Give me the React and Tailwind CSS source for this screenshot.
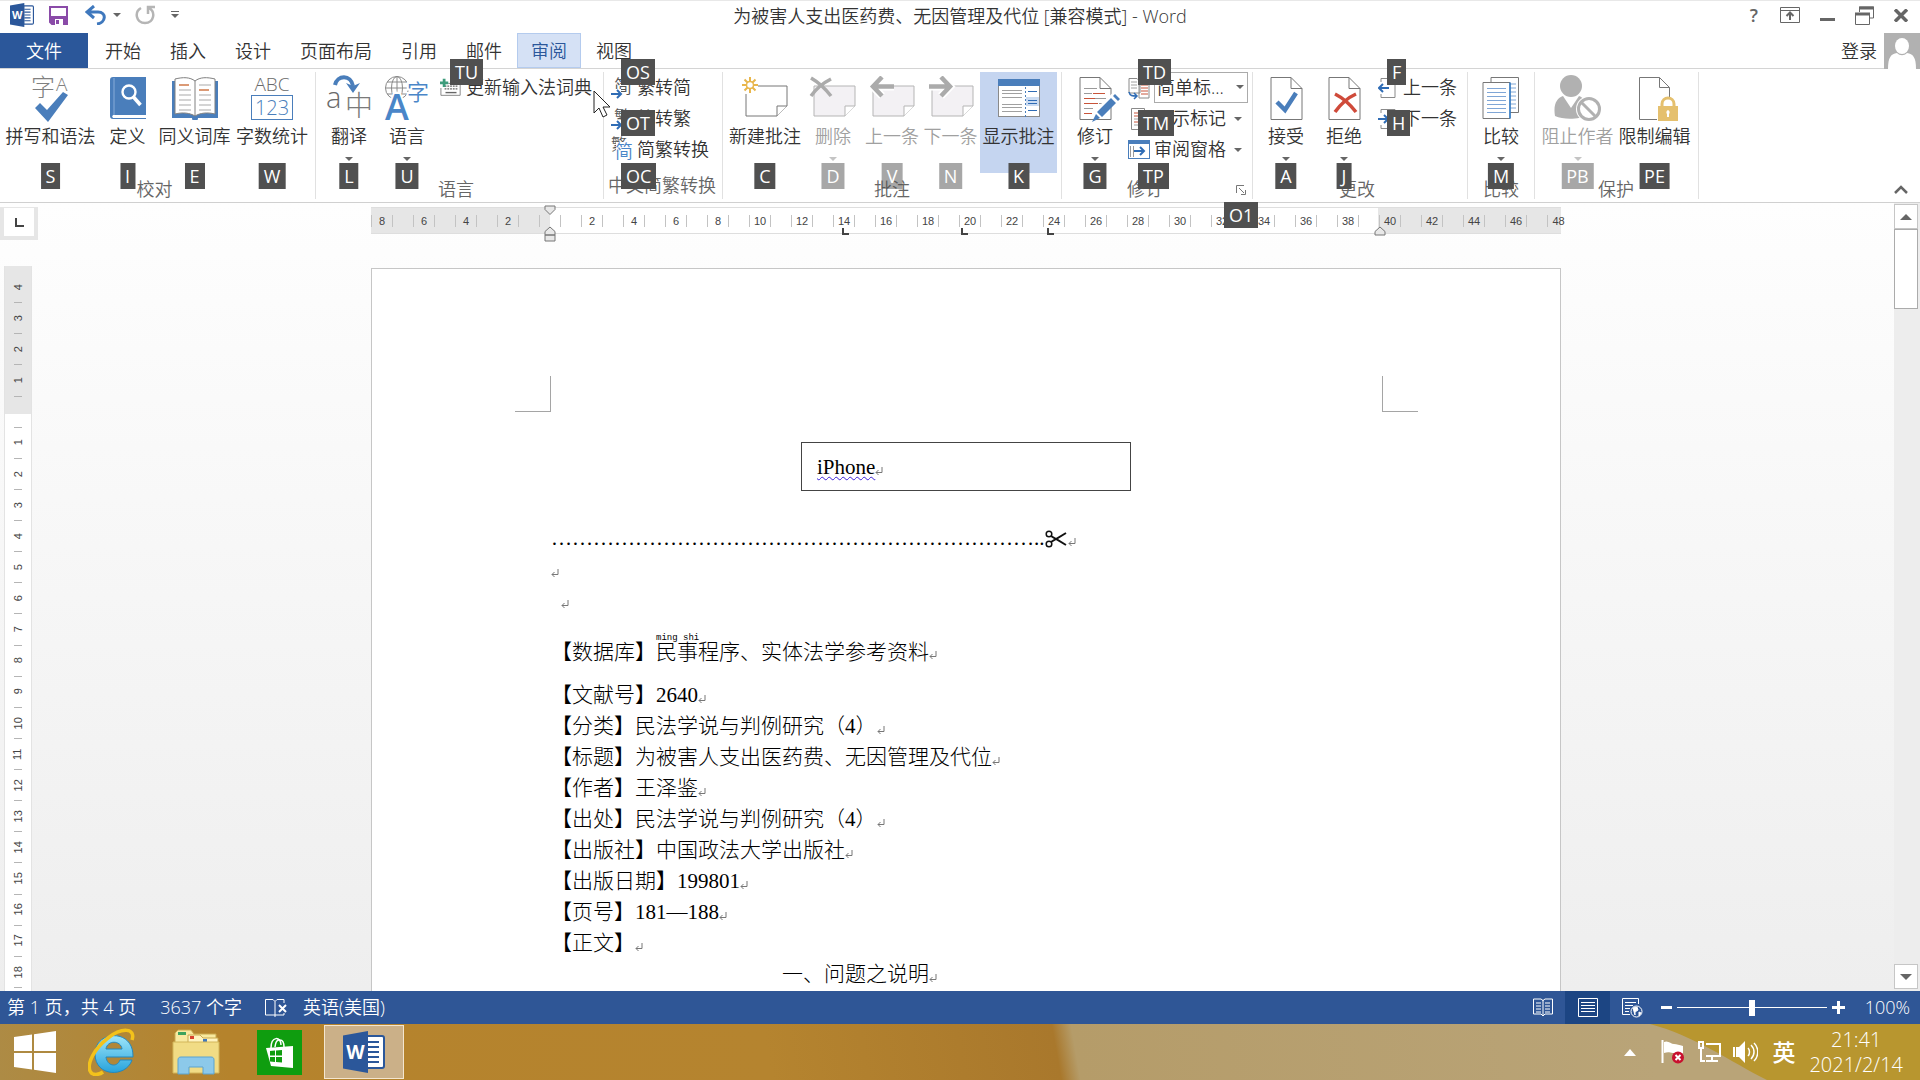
import React from 'react';
import clsx from 'clsx';

const UI_FONT = "font-['Open_Sans','Noto_Sans_CJK_SC',sans-serif]";
const DOC_FONT = "font-['Liberation_Serif','Noto_Sans_CJK_SC',serif]";

const tabs = ['开始', '插入', '设计', '页面布局', '引用', '邮件', '审阅', '视图'];
const hRuler = [8, 6, 4, 2, '', 2, 4, 6, 8, 10, 12, 14, 16, 18, 20, 22, 24, 26, 28, 30, 32, 34, 36, 38, 40, 42, 44, 46, 48];
const vRuler = [4, 3, 2, 1, '', 1, 2, 3, 4, 5, 6, 7, 8, 9, 10, 11, 12, 13, 14, 15, 16, 17, 18];

const records = [
    '【文献号】2640',
    '【分类】民法学说与判例研究（4）',
    '【标题】为被害人支出医药费、无因管理及代位',
    '【作者】王泽鉴',
    '【出处】民法学说与判例研究（4）',
    '【出版社】中国政法大学出版社',
    '【出版日期】199801',
    '【页号】181—188',
    '【正文】',
];

/* ---------- shared bits ---------- */

function KeyTip({ children, className, dim }) {
    return (
        <span className={clsx('absolute z-20 h-[26px] px-[5px] text-center text-lg leading-[26px] font-normal text-white', dim ? 'bg-[#505050]/50' : 'bg-[#505050]', className)}>
            {children}
        </span>
    );
}

function Caret({ className }) {
    return (
        <svg width="8" height="4" viewBox="0 0 8 4" className={clsx('shrink-0', className)}>
            <path d="M0 0h8L4 4z" fill="currentColor" />
        </svg>
    );
}

function Group({ label, children, className, labelClass, launcher }) {
    return (
        <section className={clsx('relative flex h-[127px] shrink-0 flex-col border-r border-[#e1e1e1]', className)}>
            <div className="flex h-[103px]">{children}</div>
            <div className={clsx('pt-0.5 text-center text-lg leading-[28px] whitespace-nowrap text-[#666]', labelClass)}>{label}</div>
            {launcher}
        </section>
    );
}

function BigButton({ icon, label, tip, arrow, disabled, active, className }) {
    return (
        <button
            disabled={disabled}
            className={clsx('relative flex h-[101px] flex-col items-center pt-0.5 text-lg', className, active && 'bg-[#c5d5f0]', disabled ? 'text-[#a0a0a0]' : 'text-[#333]')}
        >
            <span className="flex h-12 items-center justify-center">{icon}</span>
            <span className="leading-[28px] whitespace-nowrap">{label}</span>
            {arrow && <Caret className={clsx('mt-[7px]', disabled ? 'text-[#c4c4c4]' : 'text-[#666]')} />}
            <KeyTip dim={disabled} className="top-[91px] left-1/2 -translate-x-1/2">{tip}</KeyTip>
        </button>
    );
}

function SmallButton({ icon, label, tip, tipClass, arrow }) {
    return (
        <button className="relative flex h-[31px] items-center gap-1 text-lg whitespace-nowrap text-[#333]">
            <span className="flex w-[22px] shrink-0 justify-center">{icon}</span>
            <span className="pb-0.5 leading-7">{label}</span>
            {arrow && <Caret className="ml-1 text-[#666]" />}
            <KeyTip className={tipClass}>{tip}</KeyTip>
        </button>
    );
}

/* ---------- ribbon icons ---------- */

const SpellIcon = () => (
    <svg width="44" height="48" viewBox="0 0 44 48" className="overflow-visible">
        <text x="2" y="22" fontSize="24" fontWeight="300" fill="#808080" fontFamily="Noto Sans CJK SC">字</text>
        <text x="27" y="17" fontSize="19" fill="#808080" fontFamily="Open Sans">A</text>
        <path d="M6 34l5-5 7 7L34 18l5 3-20 27z" fill="#4a7ebb" />
    </svg>
);

const DefineIcon = () => (
    <svg width="36" height="42" viewBox="0 0 36 42">
        <path d="M3 0h33v38H3a2 2 0 000 3h33v1H3a3 3 0 01-3-3V3a3 3 0 013-3z" fill="#4a7ebb" />
        <path d="M4 1v37" stroke="#86abd8" />
        <circle cx="19" cy="15" r="6.500" fill="none" stroke="#fff" strokeWidth="2.400" />
        <path d="M23.500 20l7 8" stroke="#fff" strokeWidth="3.500" />
    </svg>
);

const ThesaurusIcon = () => (
    <svg width="46" height="44" viewBox="0 0 46 44">
        <path d="M0 5h46v37H26a3 3 0 01-6 0H0z" fill="#4a7ebb" />
        <path d="M3 3c8-2 15-2 20 2 5-4 12-4 20-2v35c-8-2-15-1-20 2-5-3-12-4-20-2z" fill="#fff" stroke="#808080" />
        <path d="M23 5v35" stroke="#808080" />
        <path d="M7 14h12M7 19h12M7 24h12M7 29h12M7 34h12M27 9h12M27 19h12M27 24h12M27 29h12M27 34h12" stroke="#a9a9a9" />
        <path d="M7 9h10M27 14h10" stroke="#cf7a4a" strokeWidth="1.500" />
    </svg>
);

const CountIcon = () => (
    <svg width="42" height="48" viewBox="0 0 42 48" className="overflow-visible">
        <text x="21" y="17" fontSize="19" textAnchor="middle" fill="#6a6a6a" fontFamily="Open Sans">ABC</text>
        <rect x="0.500" y="21.500" width="41" height="24" fill="#fff" stroke="#4a7ebb" />
        <text x="21" y="41" fontSize="20" textAnchor="middle" fill="#4a7ebb" fontFamily="Open Sans">123</text>
    </svg>
);

const TranslateIcon = () => (
    <svg width="48" height="48" viewBox="0 0 48 48" className="overflow-visible">
        <text x="1" y="34" fontSize="29" fill="#6a6a6a" fontFamily="Open Sans">a</text>
        <text x="20" y="42" fontSize="28" fill="#7a7a7a" fontFamily="Noto Sans CJK SC" fontWeight="300">中</text>
        <path d="M10 11C12 1 26 0 28 12" fill="none" stroke="#4a7ebb" strokeWidth="4" />
        <path d="M21 9l7 10 7-10-7 3z" fill="#4a7ebb" />
    </svg>
);

const LanguageIcon = () => (
    <svg width="46" height="48" viewBox="0 0 46 48" className="overflow-visible">
        <g fill="none" stroke="#8a8a8a">
            <circle cx="13" cy="14" r="11.500" />
            <ellipse cx="13" cy="14" rx="5.500" ry="11.500" />
            <path d="M13 2v24M1.500 14h23M3 8h20M3 20h20" />
        </g>
        <text x="23" y="26" fontSize="22" fill="#4a86c8" stroke="#fff" strokeWidth="4" paintOrder="stroke" fontFamily="Noto Sans CJK SC">字</text>
        <text x="1" y="46" fontSize="36" fontWeight="600" fill="#4a86c8" stroke="#fff" strokeWidth="4" paintOrder="stroke" fontFamily="Open Sans">A</text>
    </svg>
);

const KeyboardIcon = () => (
    <svg width="24" height="22" viewBox="0 0 24 22">
        <path d="M9 6h13v13H1v-8" fill="none" stroke="#808080" />
        <path d="M5 12h15M5 9h15" stroke="#666" strokeWidth="1.500" strokeDasharray="2 1" />
        <path d="M6 16h12" stroke="#666" strokeWidth="1.500" />
        <path d="M4.500 1v9M0 5.500h9" stroke="#3f9c7c" strokeWidth="3" />
    </svg>
);

const ConvertIcon = ({ from }) => (
    <svg width="22" height="26" viewBox="0 0 22 26" className="overflow-visible">
        <text x="3" y="18" fontSize="18" fill="#555" fontFamily="Noto Sans CJK SC">{from}</text>
        <rect x="0" y="14" width="10" height="10" fill="#fff" />
        <path d="M0 19h9M6 15l4 4-4 4" fill="none" stroke="#2f6cb5" strokeWidth="2" />
    </svg>
);

const BothIcon = () => (
    <svg width="22" height="28" viewBox="0 0 22 28" className="overflow-visible">
        <text x="0" y="14" fontSize="16" fill="#555" fontFamily="Noto Sans CJK SC">繁</text>
        <rect x="5" y="6" width="17" height="20" fill="#fff" />
        <text x="4" y="22" fontSize="18" fill="#4a86c8" fontFamily="Noto Sans CJK SC">简</text>
    </svg>
);

function Note({ dim, children }) {
    return (
        <svg width="48" height="44" viewBox="0 0 48 44">
            <path d="M5 10h41v20L36 40H5z" fill={dim ? '#f3f1f4' : '#fff'} stroke={dim ? '#b5b5b5' : '#777'} />
            <path d="M36 40V30h10" fill="#fff" stroke={dim ? '#b5b5b5' : '#777'} />
            {children}
        </svg>
    );
}

const NewNoteIcon = () => (
    <Note>
        <rect x="1" y="2" width="16" height="16" fill="#fff" />
        <path d="M9 1v16M1 9h16M3.500 3.500l11 11M14.500 3.500l-11 11" stroke="#e8b64c" strokeWidth="2" />
        <circle cx="9" cy="9" r="3.500" fill="#fff" stroke="#e8b64c" strokeWidth="1.500" />
    </Note>
);

const DeleteNoteIcon = () => (
    <Note dim>
        <path d="M2 2c7 4 13 9 20 18M22 3C14 7 7 13 2 20" fill="none" stroke="#ababab" strokeWidth="3.500" />
    </Note>
);

const PrevNoteIcon = () => (
    <Note dim>
        <path d="M26 10.500H6M14 1L5 10.500 14 20" fill="none" stroke="#fff" strokeWidth="8" />
        <path d="M26 10.500H6M14 1L5 10.500 14 20" fill="none" stroke="#ababab" strokeWidth="4.500" />
    </Note>
);

const NextNoteIcon = () => (
    <Note dim>
        <path d="M2 10.500h20M14 1l9 9.500L14 20" fill="none" stroke="#fff" strokeWidth="8" />
        <path d="M2 10.500h20M14 1l9 9.500L14 20" fill="none" stroke="#ababab" strokeWidth="4.500" />
    </Note>
);

const ShowNotesIcon = () => (
    <svg width="42" height="38" viewBox="0 0 42 38">
        <rect x="0.500" y="0.500" width="41" height="37" fill="#fff" stroke="#8a8a8a" />
        <path d="M0 0h42v7H0z" fill="#4a7ebb" />
        <path d="M4 11.500h20M4 14.500h20M4 18.500h20M4 25.500h20M4 28.500h20M4 32.500h20" stroke="#a0a0a0" />
        <path d="M27.500 8v30" stroke="#4a7ebb" strokeDasharray="2 2" />
        <path d="M28 18h13v9H28z" fill="#cbdcf2" />
        <path d="M30 12.500h9M30 21.500h9M30 24.500h9M30 31.500h9" stroke="#2f6cb5" />
    </svg>
);

function Sheet({ children }) {
    return (
        <svg width="36" height="48" viewBox="0 0 36 48" className="overflow-visible">
            <path d="M3 3.500h20l11 11v31H3z" fill="#fff" stroke="#777" />
            <path d="M23 3.500v11h11" fill="none" stroke="#777" />
            {children}
        </svg>
    );
}

const TrackIcon = () => (
    <Sheet>
        <path d="M7 14.500h13M7 19.500h8M18 24.500h11M7 34.500h9M22 29.500h6" stroke="#9a9a9a" />
        <path d="M16 19.500h12M7 24.500h11M7 29.500h14M7 39.500h8" stroke="#c8543a" />
        <path d="M19 41L39 22" stroke="#fff" strokeWidth="9" />
        <path d="M20 38l14-14 5 5-14 14zM36 22l2-2 5 5-2 2zM19 40l4 4-8 4z" fill="#4a7ebb" />
    </Sheet>
);

const AcceptIcon = () => (
    <Sheet>
        <path d="M9 28l8 8 11-17" fill="none" stroke="#4a7ebb" strokeWidth="4.500" />
    </Sheet>
);

const RejectIcon = () => (
    <Sheet>
        <path d="M9 20c8 4 14 9 21 18M30 20C21 24 14 31 9 38" fill="none" stroke="#cf4a3a" strokeWidth="3.500" />
    </Sheet>
);

const DisplayIcon = () => (
    <svg width="22" height="24" viewBox="0 0 22 24">
        <path d="M1 2.500h8l3 3V17H1zM11 5.500h10V22H11z" fill="#fff" stroke="#8a8a8a" />
        <path d="M3 6h6M3 9h6M3 12h6" stroke="#a0a0a0" />
        <path d="M13 9h7M13 12h7M13 15h7M13 18h7" stroke="#c8543a" />
        <path d="M1 16c1 4 3 4 8 4M6 17l3 3-3 3" fill="none" stroke="#2f6cb5" strokeWidth="1.500" />
    </svg>
);

const MarkupIcon = () => (
    <svg width="22" height="24" viewBox="0 0 22 24">
        <path d="M3.500 1.500h13v21h-13z" fill="#fff" stroke="#8a8a8a" />
        <path d="M6 6h8M6 9h8M6 15h8" stroke="#c8543a" />
        <path d="M6 12h8M6 18h8" stroke="#a0a0a0" />
    </svg>
);

const PaneIcon = () => (
    <svg width="22" height="20" viewBox="0 0 22 20">
        <rect x="0.500" y="0.500" width="21" height="18" fill="#fff" stroke="#4a7ebb" />
        <path d="M0 0h22v4H0z" fill="#4a7ebb" />
        <path d="M2.500 6v11M5.500 6v11" stroke="#9a9a9a" />
        <path d="M6 11h10M12 7l4 4-4 4" fill="none" stroke="#2f6cb5" strokeWidth="2" />
    </svg>
);

const StepIcon = ({ next }) => (
    <svg width="20" height="22" viewBox="0 0 20 22">
        <path d="M3 5V1.500h14v19H3V17" fill="#fff" stroke="#8a8a8a" />
        <path d={next ? 'M0 11h10M6 7l4 4-4 4' : 'M11 11H1M5 7l-4 4 4 4'} fill="none" stroke="#2f6cb5" strokeWidth="2" />
    </svg>
);

const CompareIcon = () => (
    <svg width="38" height="44" viewBox="0 0 38 44">
        <path d="M9 1.500h27.500v35H9z" fill="#fff" stroke="#777" />
        <path d="M28 8h6M28 12h6M28 16h6M28 20h6M28 24h6M28 28h6M28 32h6" stroke="#7fa6d6" />
        <path d="M1 6.500h27v36H1z" fill="#fff" stroke="#777" />
        <path d="M28 6.500v36" stroke="#2f7fd0" strokeWidth="1.500" />
        <path d="M5 12.500h19M5 16.500h19M5 20.500h19M5 24.500h19M5 28.500h19M5 32.500h19M5 36.500h19" stroke="#7fa6d6" />
    </svg>
);

const BlockIcon = () => (
    <svg width="48" height="48" viewBox="0 0 48 48">
        <circle cx="17" cy="12" r="11" fill="#b1b1b1" />
        <path d="M1 42c-2-12 2-18 8-20l8 12 8-12c5 2 8 6 9 18-8 6-24 6-33 2z" fill="#b1b1b1" />
        <circle cx="35" cy="35" r="13" fill="#fff" />
        <circle cx="35" cy="35" r="10.500" fill="none" stroke="#b1b1b1" strokeWidth="3" />
        <path d="M27 28l15 15" stroke="#b1b1b1" strokeWidth="3" />
    </svg>
);

const RestrictIcon = () => (
    <svg width="34" height="48" viewBox="0 0 34 48" className="overflow-visible">
        <path d="M1.500 3.500h20l10 10v32h-30z" fill="#fff" stroke="#777" />
        <path d="M21.500 3.500v10h10" fill="none" stroke="#777" />
        <path d="M19 24h23v24H19z" fill="#fff" />
        <path d="M24 34v-4c0-8 12-8 12 0v4" fill="none" stroke="#e5c06e" strokeWidth="3" />
        <path d="M20 32h20v15H20z" fill="#e5c06e" />
        <path d="M30 36a2.500 2.500 0 011 4v3h-2v-3a2.500 2.500 0 011-4z" fill="#fff" />
    </svg>
);

/* ---------- window chrome ---------- */

const WordIcon = ({ size }) => (
    <svg width={size} height={size} viewBox="0 0 42 42">
        <path d="M24 5h15a2 2 0 012 2v28a2 2 0 01-2 2H24z" fill="#fff" stroke="#2b579a" strokeWidth="2" />
        <path d="M25 11h11M25 16h11M25 21h11M25 26h11M25 31h11" stroke="#2b579a" strokeWidth="2" />
        <path d="M0 4.500L25 0v42L0 37.500z" fill="#2b579a" />
        <text x="12.500" y="28" fontSize="19" fontWeight="700" textAnchor="middle" fill="#fff" fontFamily="Open Sans">W</text>
    </svg>
);

function TitleBar() {
    return (
        <header className="relative flex h-[33px] shrink-0 items-center justify-between border-t border-[#e8e8e8] text-[#666]">
            <div className="flex items-center pb-1 pl-2.5">
                <button aria-label="Word"><WordIcon size={24} /></button>
                <button aria-label="保存" className="ml-[15px]">
                    <svg width="19" height="19" viewBox="0 0 19 19">
                        <path d="M1 1h17v17H3l-2-2z" fill="#fff" stroke="#8a4ba8" strokeWidth="2" />
                        <path d="M2 10h15v8H2z" fill="#8a4ba8" />
                        <path d="M6 13h8v6H6z" fill="#fff" />
                        <path d="M7 14h3v4H7z" fill="#8a4ba8" />
                    </svg>
                </button>
                <button aria-label="撤消" className="ml-[17px] flex items-center gap-1.5">
                    <svg width="22" height="20" viewBox="0 0 22 20">
                        <path d="M9 1L2 7l7 6M3 7h10c9 0 8 11-1 12" fill="none" stroke="#3f78bd" strokeWidth="3" />
                    </svg>
                    <Caret />
                </button>
                <button aria-label="恢复" className="ml-3.5">
                    <svg width="20" height="20" viewBox="0 0 20 20">
                        <path d="M6 3C-1 7 1 18 10 18s11-11 4-15M13 9V2h7" fill="none" stroke="#b5b5b5" strokeWidth="2.500" />
                    </svg>
                </button>
                <button aria-label="自定义快速访问工具栏" className="ml-4">
                    <svg width="8" height="8" viewBox="0 0 8 8">
                        <path d="M0 0.500h8" stroke="#666" />
                        <path d="M0 3h8L4 7z" fill="#666" />
                    </svg>
                </button>
            </div>
            <h1 className="absolute left-1/2 -translate-x-1/2 pb-0.5 text-lg leading-[30px] whitespace-nowrap text-[#333]">
                为被害人支出医药费、无因管理及代位 [兼容模式] - Word
            </h1>
            <div className="flex items-center gap-5 pr-3 pb-1">
                <button aria-label="帮助" className="mr-0.5 text-lg leading-6 font-semibold">?</button>
                <button aria-label="功能区显示选项">
                    <svg width="20" height="16" viewBox="0 0 20 16" fill="none" stroke="#666">
                        <path d="M0.500 0.500h19v15H0.500zM0.500 3.500h19" />
                        <path d="M10 13V6M6.500 9L10 5.500 13.500 9" strokeWidth="2" />
                    </svg>
                </button>
                <button aria-label="最小化" className="pt-2">
                    <svg width="15" height="3" viewBox="0 0 15 3"><path d="M0 0h15v3H0z" fill="#666" /></svg>
                </button>
                <button aria-label="向下还原">
                    <svg width="19" height="19" viewBox="0 0 19 19" fill="none" stroke="#666">
                        <path d="M4.500 6V1h14v11H15" />
                        <path d="M4 2h15M0 8h15" strokeWidth="3" />
                        <path d="M0.500 7v11.500h14V7" />
                    </svg>
                </button>
                <button aria-label="关闭">
                    <svg width="14" height="13" viewBox="0 0 14 13"><path d="M1 0.500l12 12M13 0.500l-12 12" stroke="#666" strokeWidth="3.500" /></svg>
                </button>
            </div>
        </header>
    );
}

function TabStrip() {
    return (
        <nav className="flex h-9 shrink-0 border-b border-[#d4d4d4] text-lg text-[#333]">
            <button className="w-[88px] bg-[#2b579a] text-white">文件</button>
            <div className="ml-[3px] flex gap-px">
                {tabs.map((t) => (
                    <button key={t} className={clsx('px-3.5', t === '审阅' && 'bg-[#d5e1f5] text-[#2b579a] outline -outline-offset-1 outline-[#b4cbee]')}>
                        {t}
                    </button>
                ))}
            </div>
            <button className="ml-auto flex items-center gap-[7px]">
                登录
                <svg width="36" height="36" viewBox="0 0 36 36">
                    <path d="M0 0h36v36H0z" fill="#b1b1b1" />
                    <ellipse cx="18" cy="13" rx="7" ry="8" fill="#fff" />
                    <path d="M4 36c0-12 3-15 9-16 3 3 7 3 10 0 6 1 9 4 9 16z" fill="#fff" />
                </svg>
            </button>
        </nav>
    );
}

function Ribbon() {
    return (
        <div className="relative flex h-[134px] shrink-0 border-b border-[#d0d0d0] pt-[3px]">
            <Group label="校对" className="pr-1.5">
                <BigButton icon={<SpellIcon />} label="拼写和语法" tip="S" className="w-[101px]" />
                <BigButton icon={<DefineIcon />} label="定义" tip="I" className="w-[53px]" />
                <BigButton icon={<ThesaurusIcon />} label="同义词库" tip="E" className="w-[81px]" />
                <BigButton icon={<CountIcon />} label="字数统计" tip="W" className="w-[74px]" />
            </Group>
            <Group label="语言" className="pr-[11px] pl-1">
                <BigButton icon={<TranslateIcon />} label="翻译" tip="L" arrow className="w-[58px]" />
                <BigButton icon={<LanguageIcon />} label="语言" tip="U" arrow className="w-[58px]" />
                <div className="ml-1">
                    <SmallButton icon={<KeyboardIcon />} label="更新输入法词典" tip="TU" tipClass="-top-[13px] left-2.5" />
                </div>
            </Group>
            <Group label="中文简繁转换" className="pr-1.5 pl-1">
                <div className="ml-[3px]">
                    <SmallButton icon={<ConvertIcon from="简" />} label="繁转简" tip="OS" tipClass="-top-[13px] left-2.5" />
                    <SmallButton icon={<ConvertIcon from="繁" />} label="简转繁" tip="OT" tipClass="top-[7px] left-2.5" />
                    <SmallButton icon={<BothIcon />} label="简繁转换" tip="OC" tipClass="top-[29px] left-2.5" />
                </div>
            </Group>
            <Group label="批注" className="px-1">
                <BigButton icon={<NewNoteIcon />} label="新建批注" tip="C" className="w-[76px]" />
                <BigButton icon={<DeleteNoteIcon />} label="删除" tip="D" arrow disabled className="w-[60px]" />
                <BigButton icon={<PrevNoteIcon />} label="上一条" tip="V" disabled className="w-[58px]" />
                <BigButton icon={<NextNoteIcon />} label="下一条" tip="N" disabled className="w-[59px]" />
                <BigButton icon={<ShowNotesIcon />} label="显示批注" tip="K" active className="w-[77px]" />
            </Group>
            <Group
                label="修订"
                className="px-1"
                labelClass="pr-6"
                launcher={
                    <button aria-label="修订选项" className="absolute right-1.5 bottom-1">
                        <svg width="10" height="10" viewBox="0 0 10 10" fill="none" stroke="#777">
                            <path d="M0.500 8V0.500H8M3 3l5 5M9.500 5v4.500H5" />
                        </svg>
                        <KeyTip className="top-[17px] -left-3">O1</KeyTip>
                    </button>
                }
            >
                <BigButton icon={<TrackIcon />} label="修订" tip="G" arrow className="w-[58px]" />
                <div className="ml-1">
                    <div className="relative flex h-[31px] items-center gap-1">
                        <DisplayIcon />
                        <div className="relative">
                            <select aria-label="显示以供审阅" className="h-[31px] w-[94px] appearance-none border border-[#ababab] bg-white pb-0.5 pl-0.5 text-lg leading-7 text-[#333]">
                                <option>简单标...</option>
                            </select>
                            <Caret className="absolute top-[13px] right-1 text-[#666]" />
                        </div>
                        <KeyTip className="-top-[13px] left-2.5">TD</KeyTip>
                    </div>
                    <SmallButton icon={<MarkupIcon />} label="显示标记" tip="TM" tipClass="top-[7px] left-2.5" arrow />
                    <SmallButton icon={<PaneIcon />} label="审阅窗格" tip="TP" tipClass="top-[29px] left-2.5" arrow />
                </div>
            </Group>
            <Group label="更改" className="pr-2.5 pl-1">
                <BigButton icon={<AcceptIcon />} label="接受" tip="A" arrow className="w-[58px]" />
                <BigButton icon={<RejectIcon />} label="拒绝" tip="J" arrow className="w-[58px]" />
                <div className="ml-1">
                    <SmallButton icon={<StepIcon />} label="上一条" tip="F" tipClass="-top-[13px] left-2.5" />
                    <SmallButton icon={<StepIcon next />} label="下一条" tip="H" tipClass="top-[7px] left-2.5" />
                </div>
            </Group>
            <Group label="比较" className="px-1">
                <BigButton icon={<CompareIcon />} label="比较" tip="M" arrow className="w-[58px]" />
            </Group>
            <Group label="保护" className="pr-[5px] pl-1">
                <BigButton icon={<BlockIcon />} label="阻止作者" tip="PB" arrow disabled className="w-[77px]" />
                <BigButton icon={<RestrictIcon />} label="限制编辑" tip="PE" className="w-[77px]" />
            </Group>
            <button aria-label="折叠功能区" className="mt-auto mr-3 mb-2 ml-auto">
                <svg width="14" height="9" viewBox="0 0 14 9"><path d="M1 8l6-6 6 6" fill="none" stroke="#666" strokeWidth="2.500" /></svg>
            </button>
        </div>
    );
}

/* ---------- document area ---------- */

const Mark = () => (
    <svg width="8" height="8" viewBox="0 0 8 8" className="mt-1.5 inline-block" fill="none" stroke="#777">
        <path d="M7 0v5.500H1M3.500 3L1 5.500 3.500 8" />
    </svg>
);

const TabStop = ({ className }) => (
    <svg width="7" height="7" viewBox="0 0 7 7" className={clsx('absolute -bottom-0.5', className)}>
        <path d="M1 0v6h6" fill="none" stroke="#444" strokeWidth="2" />
    </svg>
);

function HorizontalRuler() {
    return (
        <div className="relative mx-auto mt-1 flex h-[27px] w-[1190px] shrink-0 items-center border-y border-[#dedede] bg-[linear-gradient(to_right,#e6e6e6_179px,#fff_179px,#fff_1007px,#e6e6e6_1007px)] font-['Liberation_Sans',sans-serif] text-[11px] font-normal text-[#444]">
            <div className="-mx-2.5 flex">
                {hRuler.map((n, i) => (
                    <div key={i} className="flex w-[42px] justify-center">
                        <span className={clsx('h-3 w-[22px] border-l border-[#c3c3c3] text-center leading-3', i < hRuler.length - 1 && 'border-r')}>{n}</span>
                    </div>
                ))}
            </div>
            <TabStop className="left-[471px]" />
            <TabStop className="left-[590px]" />
            <TabStop className="left-[676px]" />
            <svg width="12" height="38" viewBox="0 0 12 38" className="absolute -top-[3px] left-[173px]" fill="#e8e8e8" stroke="#777">
                <path d="M1 1h10v3.500L6 9.500 1 4.500z" />
                <path d="M1 30v-3.500L6 22l5 4.500V30zM1 30h10v6H1z" />
            </svg>
            <svg width="12" height="10" viewBox="0 0 12 10" className="absolute -bottom-[3px] left-[1003px]" fill="#e8e8e8" stroke="#777">
                <path d="M1 9V5.500L6 1l5 4.500V9z" />
            </svg>
        </div>
    );
}

function VerticalRuler() {
    return (
        <div className="flex w-[38px] shrink-0 flex-col font-['Liberation_Sans',sans-serif] text-[11px] font-normal text-[#444]">
            <button aria-label="制表符" className="mt-1 flex h-[33px] items-center justify-center border-4 border-t border-[#e6e6e6] bg-white">
                <svg width="9" height="9" viewBox="0 0 9 9"><path d="M1 0v8h8" fill="none" stroke="#444" strokeWidth="2" /></svg>
            </button>
            <div className="mt-[26px] ml-1 flex w-7 flex-1 flex-col border-x border-[#e3e3e3] bg-[linear-gradient(to_bottom,#e6e6e6_148px,#fff_148px)] pt-1.5 pb-[3px]">
                {vRuler.map((n, i) => (
                    <div key={i} className="flex flex-1 flex-col items-center">
                        <span className="flex flex-1 items-center">
                            <span className="-rotate-90">{n}</span>
                        </span>
                        <span className="h-px w-2 bg-[#b5b5b5]" />
                    </div>
                ))}
            </div>
        </div>
    );
}

function Page() {
    return (
        <article className={clsx('relative mx-auto mt-[34px] w-[1190px] flex-1 overflow-hidden border border-b-0 border-[#c6c6c6] bg-white pt-[173px] pl-[179px] text-[21px] leading-[31px] font-light whitespace-nowrap text-black', DOC_FONT)}>
            <span className="absolute top-[107px] left-[143px] h-9 w-9 border-r border-b border-[#a5a5a5]" />
            <span className="absolute top-[107px] right-[142px] h-9 w-9 border-b border-l border-[#a5a5a5]" />

            <div className="ml-[250px] flex h-[49px] w-[330px] items-center border border-[#444] pt-0.5 pl-[15px]">
                <span className="underline decoration-[#3a20d8] decoration-wavy decoration-1 underline-offset-2">iPhone</span>
                <Mark />
            </div>

            <p className="mt-8 flex h-[31px] items-center">
                {'…'.repeat(23)}..
                <svg width="23" height="18" viewBox="0 0 23 18" fill="none" stroke="#111" strokeWidth="1.500">
                    <circle cx="4" cy="4" r="2.800" />
                    <circle cx="4" cy="14" r="2.800" />
                    <path d="M6 6l5 3 10-6M6 12l5-3 10 6" strokeWidth="2" />
                </svg>
                <Mark />
            </p>
            <p className="flex h-[31px] items-center"><Mark /></p>
            <p className="flex h-[31px] items-center pl-2.5"><Mark /></p>

            <p className="flex h-16 items-center pt-2">
                【数据库】
                <span className="relative">
                    民事
                    <span className="absolute -top-[3px] left-0 font-['Liberation_Mono',monospace] text-[9px] leading-none">ming shi</span>
                </span>
                程序、实体法学参考资料
                <Mark />
            </p>
            {records.map((r) => (
                <p key={r} className="flex h-[31px] items-center">{r}<Mark /></p>
            ))}
            <p className="flex h-[31px] items-center pl-[231px]">一、问题之说明<Mark /></p>
        </article>
    );
}

function ScrollBar() {
    return (
        <div className="flex w-[26px] shrink-0 flex-col bg-[#ededed] pt-px pr-0.5 pb-0.5">
            <button aria-label="向上滚动" className="flex h-[25px] items-center justify-center border border-[#c6c6c6] bg-white">
                <svg width="12" height="6" viewBox="0 0 12 6"><path d="M0 6L6 0l6 6z" fill="#666" /></svg>
            </button>
            <div className="h-20 border border-[#ababab] bg-white" />
            <button aria-label="向下滚动" className="mt-auto flex h-[25px] items-center justify-center border border-[#c6c6c6] bg-white">
                <svg width="12" height="6" viewBox="0 0 12 6"><path d="M0 0h12L6 6z" fill="#666" /></svg>
            </button>
        </div>
    );
}

/* ---------- status bar and taskbar ---------- */

function StatusBar() {
    return (
        <footer className="flex h-[33px] shrink-0 items-center bg-[#2f5696] pl-[7px] text-lg leading-7 text-white">
            <button className="pb-0.5">第 1 页，共 4 页</button>
            <button className="ml-6 pb-0.5">3637 个字</button>
            <button aria-label="校对" className="ml-[23px]">
                <svg width="22" height="20" viewBox="0 0 22 20" fill="none" stroke="#fff">
                    <path d="M10 17H0.500V1.500H8l2 2V19M10 3.500l2-2h7V5M10 17h9v-2" />
                    <path d="M14 7l7 7M21 7l-7 7" strokeWidth="2" />
                </svg>
            </button>
            <button className="ml-4 pb-0.5">英语(美国)</button>
            <div className="ml-auto flex h-full items-center">
                <button aria-label="阅读视图" className="flex w-[45px] justify-center">
                    <svg width="20" height="19" viewBox="0 0 20 19" fill="none" stroke="#fff">
                        <path d="M10 2.500L8 1H0.500v15H8l2 2 2-2h7.500V1H12zM10 2v16" />
                        <path d="M3 5h5M3 8h5M3 11h5M3 14h5M12 5h5M12 8h5M12 11h5M12 14h5" />
                    </svg>
                </button>
                <button aria-label="页面视图" className="flex h-full w-[45px] items-center justify-center bg-[#1c4583]">
                    <svg width="20" height="19" viewBox="0 0 20 19" fill="none" stroke="#fff">
                        <path d="M0.500 0.500h19v18H0.500zM3 4.500h14M3 7.500h14M3 10.500h14M3 13.500h14" />
                    </svg>
                </button>
                <button aria-label="Web 版式视图" className="flex w-[45px] justify-center">
                    <svg width="21" height="20" viewBox="0 0 21 20" fill="none" stroke="#fff">
                        <path d="M8 16.500H0.500v-16h16V6M3 4.500h11M3 7.500h8M3 10.500h5M3 13.500h4" />
                        <circle cx="14.500" cy="13.500" r="5.500" />
                        <path d="M11 10l4-1 1 3-3 2v3zM17 14l2 1-2 3z" fill="#fff" />
                    </svg>
                </button>
                <button aria-label="缩小" className="ml-1.5"><svg width="11" height="3" viewBox="0 0 11 3"><path d="M0 0h11v3H0z" fill="#fff" /></svg></button>
                <input
                    type="range"
                    aria-label="缩放"
                    min="10"
                    max="190"
                    defaultValue="100"
                    className="mx-[5px] h-4 w-[150px] appearance-none bg-[linear-gradient(#fff,#fff)] bg-[length:100%_1px] bg-center bg-no-repeat [&::-webkit-slider-thumb]:h-4 [&::-webkit-slider-thumb]:w-1.5 [&::-webkit-slider-thumb]:appearance-none [&::-webkit-slider-thumb]:bg-white"
                />
                <button aria-label="放大"><svg width="13" height="13" viewBox="0 0 13 13"><path d="M0 6.500h13M6.500 0v13" stroke="#fff" strokeWidth="3" /></svg></button>
                <button className="w-[75px] pr-2.5 pb-0.5 text-right">100%</button>
            </div>
        </footer>
    );
}

function TaskBar() {
    return (
        <div className="relative flex h-14 shrink-0 items-center bg-[linear-gradient(80deg,#ad8b45,#b5832c_12%,#b5842f_40%,#a9782c_55%,#b59c69_56%,#b9a478_86%)] text-white">
            <svg viewBox="0 0 300 56" preserveAspectRatio="none" className="absolute right-0 h-full w-[270px]">
                <path d="M0 0h300v56H130C90 38 50 12 0 0z" fill="#b8962f" />
            </svg>
            <button aria-label="开始" className="ml-3.5">
                <svg width="42" height="42" viewBox="0 0 42 42" fill="#fff">
                    <path d="M0 6l18-2.500V20H0zM20 3.200L42 0v20H20zM0 22h18v16.500L0 36zM20 22h22v20l-22-3.200z" />
                </svg>
            </button>
            <button aria-label="Internet Explorer" className="ml-[32px]">
                <svg width="48" height="48" viewBox="0 0 48 48" fill="none">
                    <defs>
                        <linearGradient id="ie" x1="0" y1="0" x2="0" y2="1">
                            <stop offset="0" stopColor="#9fe6fa" />
                            <stop offset="1" stopColor="#27a3dc" />
                        </linearGradient>
                    </defs>
                    <path d="M44 32C38 50 7 49 7 26 7 2 46 0 45 29H18c1 9 11 11 14 3zM18 21h16c-1-9-15-9-16 0z" fill="url(#ie)" stroke="#2488bd" />
                    <path d="M44 12C48 0 34-1 20 10 6 21-1 35 2 43c2 5 9 4 13 1" stroke="#f3c21b" strokeWidth="3.500" />
                </svg>
            </button>
            <button aria-label="文件资源管理器" className="ml-9">
                <svg width="48" height="46" viewBox="0 0 48 46">
                    <path d="M3 4l3-3h13l3 4h22v9H3z" fill="#f8e9a0" stroke="#c9a94f" />
                    <path d="M6 3h8v3H6z" fill="#3da35d" />
                    <path d="M16 6h12l3 3h15v8H16z" fill="#fff3c0" stroke="#c9a94f" />
                    <path d="M18 7h4v3h-4z" fill="#d8432f" />
                    <path d="M31 10h4v3h-4z" fill="#3f78bd" />
                    <path d="M1 13h46v31H1z" fill="#f1dc85" stroke="#d3b65a" />
                    <path d="M6 31c0-2 1-3 3-3h30c2 0 3 1 3 3v14H31v-7H17v7H6z" fill="#8cc9ea" stroke="#5aa3cf" />
                </svg>
            </button>
            <button aria-label="应用商店" className="ml-[37px] bg-[#0f9d0f]">
                <svg width="45" height="45" viewBox="0 0 45 45">
                    <path d="M14 18c0-12 10-12 10-3M18 17c1-10 9-9 9 0" fill="none" stroke="#fff" strokeWidth="1.500" />
                    <path d="M9 18l27-2v22l-22-2z" fill="#fff" />
                    <path d="M13 21l5-.5v5h-5zM19 20.500l6-.5v5.500h-6zM13 27h5v5l-5-.5zM19 27h6v5.500l-6-.5z" fill="#0f9d0f" />
                </svg>
            </button>
            <button aria-label="Word" className="ml-[22px] flex h-[54px] w-20 items-center justify-center border border-[#f4e6cf] bg-[#cbb088]">
                <WordIcon size={42} />
            </button>
            <div className="relative ml-auto flex items-center">
                <button aria-label="显示隐藏的图标"><svg width="12" height="7" viewBox="0 0 12 7"><path d="M0 7l6-7 6 7z" fill="#fff" /></svg></button>
                <svg width="24" height="24" viewBox="0 0 24 24" className="ml-[25px]">
                    <path d="M1.500 0v23" stroke="#fff" strokeWidth="2" />
                    <path d="M3 2c4-2 7 2 10 2s5 1 9 2v9c-5-1-7-1-10-2-4-1-6-1-9 0z" fill="#fff" />
                    <circle cx="17" cy="17.500" r="6" fill="#c8102e" />
                    <path d="M14.500 15l5 5M19.500 15l-5 5" stroke="#fff" strokeWidth="2" />
                </svg>
                <svg width="24" height="22" viewBox="0 0 24 22" className="ml-3" fill="none" stroke="#fff" strokeWidth="2">
                    <path d="M9 3h14v12H9M15 15v4M9 20h12M4 7v13h4" />
                    <path d="M2 1h4v6H2z" />
                </svg>
                <svg width="25" height="24" viewBox="0 0 25 24" className="ml-3" fill="none" stroke="#fff" strokeWidth="1.500">
                    <path d="M1 7v10" strokeWidth="2" />
                    <path d="M3 7h3l6-6v22l-6-6H3z" fill="#fff" stroke="none" />
                    <path d="M15 8c2 2 2 6 0 8M18 5c4 4 4 10 0 14M21 3c5 5 5 13 0 18" />
                </svg>
                <button className="ml-3.5 text-[23px] leading-none font-medium">英</button>
                <button className="ml-3.5 pr-[17px] text-center text-xl leading-[25px]">
                    <span className="block">21:41</span>
                    <span className="block">2021/2/14</span>
                </button>
            </div>
        </div>
    );
}

export default function App() {
    return (
        <div className={clsx('relative flex h-screen flex-col overflow-hidden bg-white font-[350]', UI_FONT)}>
            <TitleBar />
            <TabStrip />
            <Ribbon />
            <main className="flex min-h-0 flex-1 bg-linear-to-b from-[#fefefe] to-[#eeeeee]">
                <VerticalRuler />
                <div className="flex min-w-0 flex-1 flex-col">
                    <HorizontalRuler />
                    <Page />
                </div>
                <ScrollBar />
            </main>
            <StatusBar />
            <TaskBar />

            {/* mouse pointer */}
            <svg width="19" height="28" viewBox="0 0 19 28" className="absolute top-[90px] left-[593px] z-30">
                <path d="M1 1v22l5-5 4 9 4-2-4-8h7z" fill="#fff" stroke="#222" />
            </svg>
        </div>
    );
}
